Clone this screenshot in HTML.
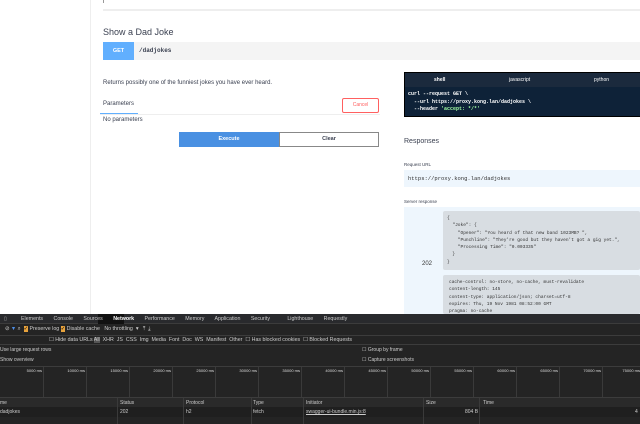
<!DOCTYPE html>
<html><head><meta charset="utf-8"><style>
*{margin:0;padding:0;box-sizing:border-box}
body{width:640px;height:424px;overflow:hidden;background:#fff;font-family:"Liberation Sans",sans-serif;position:relative}
.a{position:absolute;white-space:nowrap}
.m{font-family:"Liberation Mono",monospace}
.d{color:#ccc;font-size:5px}
.t{position:absolute;top:368px;font-size:4px;color:#ddd;width:40px;text-align:right;white-space:nowrap}
</style></head><body>
<div class="a" style="left:90px;top:0;width:1px;height:314px;background:#eee"></div>
<div class="a" style="left:103px;top:0;width:1px;height:3px;background:#999"></div>
<div class="a" style="left:103px;top:9px;width:537px;height:2px;background:#eee"></div>
<div class="a" style="left:103px;top:27px;font-size:9px;color:#3b4151">Show a Dad Joke</div>
<div class="a" style="left:103px;top:42px;width:537px;height:18px;background:#f4f4f4"></div>
<div class="a" style="left:103px;top:42px;width:31px;height:18px;background:#61affe;color:#fff;font-size:5.5px;font-weight:bold;text-align:center;line-height:18px">GET</div>
<div class="a m" style="left:139px;top:47px;font-size:6px;font-weight:bold;color:#3b4151">/dadjokes</div>
<div class="a" style="left:103px;top:80px;font-size:6px;color:#3b4151">Returns possibly one of the funniest jokes you have ever heard.</div>
<div class="a" style="left:103px;top:101px;font-size:6px;color:#3b4151">Parameters</div>
<div class="a" style="left:100px;top:113px;width:38px;height:1px;background:#61affe"></div>
<div class="a" style="left:100px;top:114px;width:280px;height:1px;background:#eee"></div>
<div class="a" style="left:342px;top:98px;width:37px;height:15px;border:1px solid #ff6060;border-radius:2px;color:#ff6060;font-size:5px;text-align:center;line-height:13px">Cancel</div>
<div class="a" style="left:103px;top:117px;font-size:6px;color:#3b4151">No parameters</div>
<div class="a" style="left:179px;top:132px;width:100px;height:15px;background:#4990e2;color:#fff;font-size:5.5px;font-weight:bold;text-align:center;line-height:15px">Execute</div>
<div class="a" style="left:279px;top:132px;width:100px;height:15px;border:1px solid #888;color:#3b4151;font-size:5.5px;font-weight:bold;text-align:center;line-height:13px">Clear</div>

<div class="a" style="left:404px;top:72px;width:236px;height:45px;background:#333;border:1px solid #000"></div>
<div class="a" style="left:405px;top:73px;width:235px;height:14px;background:#1b2a3d"></div>
<div class="a" style="left:405px;top:87px;width:235px;height:29px;background:#0e2238"></div>
<div class="a" style="left:434px;top:77px;font-size:5px;color:#fff;font-weight:bold">shell</div>
<div class="a" style="left:509px;top:77px;font-size:5px;color:#fff">javascript</div>
<div class="a" style="left:594px;top:77px;font-size:5px;color:#fff">python</div>
<div class="a m" style="left:408px;top:91px;font-size:5px;color:#fff;line-height:7.5px;font-weight:bold">curl --request GET \<br>&nbsp;&nbsp;--url https://proxy.kong.lan/dadjokes \<br>&nbsp;&nbsp;--header <span style="color:#a2fca2">'accept: */*'</span></div>
<div class="a" style="left:404px;top:138px;font-size:7px;color:#3b4151">Responses</div>
<div class="a" style="left:404px;top:162px;font-size:4.5px;color:#3b4151">Request URL</div>
<div class="a" style="left:404px;top:170px;width:236px;height:17px;background:#eef6fd"></div>
<div class="a m" style="left:408px;top:175px;font-size:5.5px;color:#333">https://proxy.kong.lan/dadjokes</div>
<div class="a" style="left:404px;top:199px;font-size:4.5px;color:#3b4151">Server response</div>
<div class="a" style="left:404px;top:207px;width:236px;height:107px;background:#eef6fd"></div>
<div class="a" style="left:422px;top:261px;font-size:6px;color:#333">202</div>
<div class="a" style="left:443px;top:211px;width:197px;height:59px;background:#d8dde2;border-radius:2px"></div>
<div class="a m" style="left:447px;top:215px;font-size:4.5px;color:#333;line-height:7.3px">{<br>&nbsp;&nbsp;"Joke": {<br>&nbsp;&nbsp;&nbsp;&nbsp;"Opener": "You heard of that new band 1023MB? ",<br>&nbsp;&nbsp;&nbsp;&nbsp;"Punchline": "They're good but they haven't got a gig yet.",<br>&nbsp;&nbsp;&nbsp;&nbsp;"Processing Time": "0.003335"<br>&nbsp;&nbsp;}<br>}</div>
<div class="a" style="left:443px;top:275px;width:197px;height:39px;background:#d8dde2;border-radius:2px"></div>
<div class="a m" style="left:449px;top:279px;font-size:4.5px;color:#333;line-height:7.3px">cache-control: no-store, no-cache, must-revalidate<br>content-length: 145<br>content-type: application/json; charset=utf-8<br>expires: Thu, 19 Nov 1981 08:52:00 GMT<br>pragma: no-cache</div>

<div class="a" style="left:0;top:314px;width:640px;height:110px;background:#242424"></div>
<div class="a" style="left:0;top:314px;width:640px;height:10px;background:#292a2d;border-bottom:1px solid #3c3c3c"></div>
<div class="a" style="left:98px;top:314px;width:26px;height:10px;background:#111"></div>
<div class="a d" style="left:4px;top:316px;color:#aaa">▯</div>
<div class="a d" style="left:21px;top:316px;font-size:5.3px;word-spacing:2px">Elements &nbsp; Console &nbsp; Sources &nbsp; <b style="color:#fff">Network</b> &nbsp; Performance &nbsp; Memory &nbsp; Application &nbsp; Security &nbsp;&nbsp;&nbsp; Lighthouse &nbsp; Requestly</div>
<div class="a d" style="left:5px;top:326px;font-size:5.3px">⊘ <span style="color:#4e8fe8">▼</span> ⌕ &nbsp;<span style="background:#e8a33d;color:#000">✓</span> Preserve log <span style="background:#e8a33d;color:#000">✓</span> Disable cache &nbsp; No throttling &nbsp;▾ &nbsp; ⤒ &nbsp;⤓</div>
<div class="a" style="left:0;top:335px;width:640px;height:10px;border-top:1px solid #3c3c3c;border-bottom:1px solid #3c3c3c"></div>
<div class="a d" style="left:49px;top:337px;font-size:5.3px">☐ Hide data URLs <span style="background:#555">All</span> &nbsp;XHR &nbsp;JS &nbsp;CSS &nbsp;Img &nbsp;Media &nbsp;Font &nbsp;Doc &nbsp;WS &nbsp;Manifest &nbsp;Other &nbsp;☐ Has blocked cookies &nbsp;☐ Blocked Requests</div>
<div class="a d" style="left:0;top:347px">Use large request rows</div>
<div class="a d" style="left:0;top:357px">Show overview</div>
<div class="a d" style="left:362px;top:347px">☐ Group by frame</div>
<div class="a d" style="left:362px;top:357px">☐ Capture screenshots</div>
<div class="a" style="left:0;top:366px;width:640px;height:1px;background:#3c3c3c"></div>
<div class="a" style="left:0;top:397px;width:640px;height:1px;background:#3c3c3c"></div>
<div class="a" style="left:0;top:398px;width:640px;height:9px;background:#2a2a2a"></div>
<div class="a" style="left:0;top:407px;width:640px;height:10px;background:#1f1f1f"></div>
<div class="a" style="left:43px;top:367px;width:1px;height:30px;background:#3a3a3a;box-shadow:43px 0 #3a3a3a,86px 0 #3a3a3a,129px 0 #3a3a3a,172px 0 #3a3a3a,215px 0 #3a3a3a,258px 0 #3a3a3a,301px 0 #3a3a3a,344px 0 #3a3a3a,387px 0 #3a3a3a,430px 0 #3a3a3a,473px 0 #3a3a3a,516px 0 #3a3a3a,559px 0 #3a3a3a,602px 0 #3a3a3a"></div>
<div class="t" style="left:2px">5000 ms</div>
<div class="t" style="left:45px">10000 ms</div>
<div class="t" style="left:88px">15000 ms</div>
<div class="t" style="left:131px">20000 ms</div>
<div class="t" style="left:174px">25000 ms</div>
<div class="t" style="left:217px">30000 ms</div>
<div class="t" style="left:260px">35000 ms</div>
<div class="t" style="left:303px">40000 ms</div>
<div class="t" style="left:346px">45000 ms</div>
<div class="t" style="left:389px">50000 ms</div>
<div class="t" style="left:432px">55000 ms</div>
<div class="t" style="left:475px">60000 ms</div>
<div class="t" style="left:518px">65000 ms</div>
<div class="t" style="left:561px">70000 ms</div>
<div class="t" style="left:600px">75000 ms</div>
<div class="a" style="left:117px;top:398px;width:1px;height:26px;background:#3a3a3a;box-shadow:66px 0 #3a3a3a,134px 0 #3a3a3a,186px 0 #3a3a3a,306px 0 #3a3a3a,362px 0 #3a3a3a"></div>
<div class="a d" style="left:0;top:400px">me</div>
<div class="a d" style="left:120px;top:400px">Status</div>
<div class="a d" style="left:186px;top:400px">Protocol</div>
<div class="a d" style="left:253px;top:400px">Type</div>
<div class="a d" style="left:306px;top:400px">Initiator</div>
<div class="a d" style="left:426px;top:400px">Size</div>
<div class="a d" style="left:483px;top:400px">Time</div>
<div class="a d" style="left:0;top:409px">dadjokes</div>
<div class="a d" style="left:120px;top:409px">202</div>
<div class="a d" style="left:186px;top:409px">h2</div>
<div class="a d" style="left:253px;top:409px">fetch</div>
<div class="a d" style="left:306px;top:409px;text-decoration:underline">swagger-ui-bundle.min.js:8</div>
<div class="a d" style="left:465px;top:409px">804 B</div>
<div class="a d" style="left:635px;top:409px">4</div>
</body></html>
